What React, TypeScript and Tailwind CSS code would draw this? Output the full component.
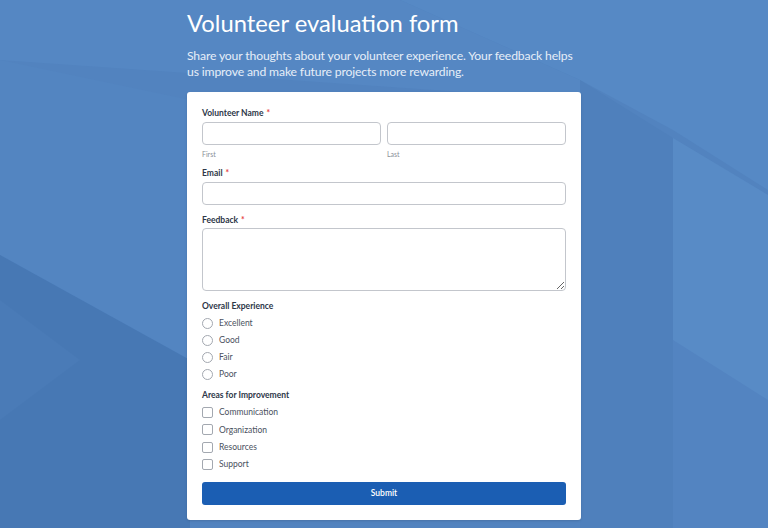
import type { ReactNode } from 'react';

const font = { fontFamily: 'Lato, "Noto Sans", sans-serif' };

function Label({ children, required }: { children: ReactNode; required?: boolean }) {
  return (
    <div className="text-[8.5px] font-bold leading-[11px] text-[#2d3748]">
      {children}
      {required && <span className="ml-[3px] text-[#e53e3e]">*</span>}
    </div>
  );
}

function TextInput() {
  return (
    <input
      type="text"
      className="block h-[23px] w-full rounded-[4px] border border-[#c3c6cc] bg-white px-2 text-[9px] outline-none"
    />
  );
}

const experience = ['Excellent', 'Good', 'Fair', 'Poor'];
const areas = ['Communication', 'Organization', 'Resources', 'Support'];

function Background() {
  // faceted blue backdrop
  return (
    <svg
      className="pointer-events-none absolute inset-0 h-full w-full"
      viewBox="0 0 768 528"
      preserveAspectRatio="none"
    >
      <rect width="768" height="528" fill="#5283bf" />
      <polygon points="0,0 768,0 768,190 673,130 580,80 400,0" fill="#5689c5" />
      <polygon points="0,0 400,0 580,80 580,100 0,60" fill="#5587c3" />
      <polygon points="0,60 190,100 190,360 0,255" fill="#5385c1" />
      <polygon points="0,255 190,360 190,528 0,528" fill="#4778b4" />
      <polygon points="0,300 80,360 0,420" fill="#4a7bb7" />
      <polygon points="580,80 673,138 673,528 580,528" fill="#4f80bc" />
      <polygon points="673,138 768,195 768,528 673,528" fill="#588bc6" />
      <polygon points="673,340 768,400 768,528 673,528" fill="#5384c1" />
    </svg>
  );
}

export default function App() {
  return (
    <div className="relative h-[528px] w-[768px] overflow-hidden" style={font}>
      <Background />
      <div className="relative mx-auto w-[394px] pt-[7px]">
        <h1 className="text-[23.8px] font-normal leading-[32px] text-white">
          Volunteer evaluation form
        </h1>
        <p className="mt-[9px] text-[12.2px] leading-[16px] tracking-[-0.15px] text-[#e6eef8]">
          Share your thoughts about your volunteer experience. Your feedback helps
          us improve and make future projects more rewarding.
        </p>

        <form className="mt-[12px] rounded-[3px] bg-white px-[15px] pb-[15px] pt-[16px] shadow-sm">
          <Label required>Volunteer Name</Label>
          <div className="mt-[3px] grid grid-cols-2 gap-[6px]">
            <div>
              <TextInput />
              <div className="mt-[5px] text-[7px] leading-[8px] text-[#8a8f98]">First</div>
            </div>
            <div>
              <TextInput />
              <div className="mt-[5px] text-[7px] leading-[8px] text-[#8a8f98]">Last</div>
            </div>
          </div>

          <div className="mt-[10px]">
            <Label required>Email</Label>
          </div>
          <div className="mt-[3px]">
            <TextInput />
          </div>

          <div className="mt-[10px]">
            <Label required>Feedback</Label>
          </div>
          <textarea className="mt-[2px] block h-[63px] w-full resize-y rounded-[4px] border border-[#c3c6cc] bg-white px-2 py-1 text-[9px] outline-none" />

          <div className="mt-[10px]">
            <Label>Overall Experience</Label>
          </div>
          <div className="mt-[3px] flex flex-col">
            {experience.map((e) => (
              <label key={e} className="flex h-[17px] items-center gap-[6px]">
                <span className="h-[11px] w-[11px] rounded-full border border-[#a3a8b0] bg-white" />
                <span className="text-[8.5px] text-[#4a5160]">{e}</span>
              </label>
            ))}
          </div>

          <div className="mt-[7px]">
            <Label>Areas for Improvement</Label>
          </div>
          <div className="mt-[3px] flex flex-col">
            {areas.map((a) => (
              <label key={a} className="flex h-[17.3px] items-center gap-[6px]">
                <span className="h-[11px] w-[11px] rounded-[2px] border border-[#a3a8b0] bg-white" />
                <span className="text-[8.5px] text-[#4a5160]">{a}</span>
              </label>
            ))}
          </div>

          <button
            type="button"
            className="mt-[9px] block h-[23px] w-full rounded-[3px] bg-[#1b5eb3] text-[8.5px] font-semibold text-white"
          >
            Submit
          </button>
        </form>
      </div>
    </div>
  );
}
